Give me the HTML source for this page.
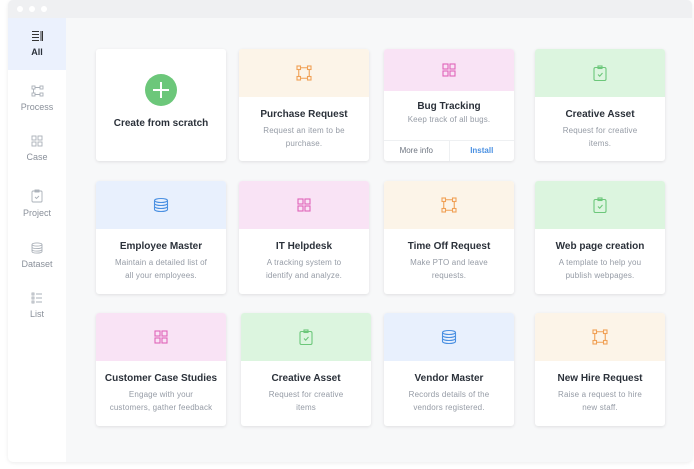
<!DOCTYPE html>
<html><head><style>
*{margin:0;padding:0;box-sizing:border-box}
body{width:694px;height:469px;background:#fff;font-family:"Liberation Sans",sans-serif;position:relative;overflow:hidden}
.win{position:absolute;left:8px;top:0;width:684px;height:462px;background:#f7f8f9;border-radius:5px;box-shadow:0 1px 4px rgba(0,0,0,.08);overflow:hidden}
.top{position:absolute;left:0;top:0;width:100%;height:18px;background:#eff0f2}
.dot{position:absolute;top:6px;width:6px;height:6px;border-radius:50%;background:#fff}
.side{position:absolute;left:0;top:18px;width:58px;height:444px;background:#fff}
.nav{position:absolute;left:0;width:58px;text-align:center;font-size:9px;color:#8a909a}
.nav svg{display:block;margin:0 auto 5px}
.card{position:absolute;width:130px;background:#fff;border-radius:3px;box-shadow:0 1px 3px rgba(0,0,0,.1);overflow:hidden;text-align:center}
.hd{height:48px;display:flex;align-items:center;justify-content:center}
.t{font-size:10px;font-weight:bold;color:#2b313a;margin-top:12px}
.d{font-size:8px;color:#959ba5;line-height:12.5px;margin-top:5px;white-space:nowrap;letter-spacing:.15px}
.o{background:#fcf4e8}.p{background:#f9e3f5}.g{background:#dcf5df}.b{background:#e8f0fd}
</style></head><body>
<div class="win">
<div class="top"><div class="dot" style="left:9px"></div><div class="dot" style="left:21px"></div><div class="dot" style="left:33px"></div></div>
<div class="side">
<div style="position:absolute;left:0;top:0;width:58px;height:52px;background:#ebf1fd"></div>
<div class="nav" style="top:12px;color:#2b313a;font-weight:bold"><svg width="12" height="12" viewBox="0 0 12 12" fill="none" stroke="#333" stroke-width="1"><path d="M1 1.5h7M1 4.5h7M1 7.5h7M1 10.5h7M10 1v10M11.5 1v10"/></svg>All</div>
<div class="nav" style="top:67px"><svg width="13" height="12" viewBox="0 0 13 12" fill="none" stroke="#aab0b8" stroke-width=".9"><rect x="1" y="1" width="3" height="3"/><rect x="9" y="1" width="3" height="3"/><rect x="1" y="8" width="3" height="3"/><rect x="9" y="8" width="3" height="3"/><path d="M4 2.5h5M4 9.5h5M2.5 4v4"/></svg>Process</div>
<div class="nav" style="top:117px"><svg width="12" height="12" viewBox="0 0 12 12" fill="none" stroke="#aab0b8" stroke-width=".9"><rect x="1" y="1" width="4" height="4"/><rect x="7" y="1" width="4" height="4"/><rect x="1" y="7" width="4" height="4"/><rect x="7" y="7" width="4" height="4"/></svg>Case</div>
<div class="nav" style="top:171px"><svg width="12" height="14" viewBox="0 0 12 14" fill="none" stroke="#aab0b8" stroke-width=".9"><rect x="1" y="2" width="10" height="11" rx="1"/><rect x="4" y="1" width="4" height="2"/><path d="M4 8l1.5 1.5L8 7"/></svg>Project</div>
<div class="nav" style="top:224px"><svg width="12" height="12" viewBox="0 0 12 12" fill="none" stroke="#aab0b8" stroke-width=".9"><ellipse cx="6" cy="2.5" rx="5" ry="1.6"/><path d="M1 2.5v7c0 1 2.2 1.6 5 1.6s5-.6 5-1.6v-7M1 5c0 1 2.2 1.6 5 1.6s5-.6 5-1.6M1 7.5c0 1 2.2 1.6 5 1.6s5-.6 5-1.6"/></svg>Dataset</div>
<div class="nav" style="top:274px"><svg width="12" height="12" viewBox="0 0 12 12" fill="none" stroke="#aab0b8" stroke-width=".9"><rect x="1" y="1" width="2" height="2"/><rect x="1" y="5" width="2" height="2"/><rect x="1" y="9" width="2" height="2"/><path d="M5 2h6M5 6h6M5 10h6"/></svg>List</div>
</div>
</div>

<svg style="display:none"><defs>
<g id="proc" fill="none" stroke="#f0a055" stroke-width="1.1"><rect x="1" y="1" width="3.5" height="3.5"/><rect x="11.5" y="1" width="3.5" height="3.5"/><rect x="1" y="11.5" width="3.5" height="3.5"/><rect x="11.5" y="11.5" width="3.5" height="3.5"/><path d="M4.5 2.75h7M4.5 13.25h7M2.75 4.5v7M13.25 4.5v7"/></g>
<g id="case" fill="none" stroke="#e064b8" stroke-width="1.1"><rect x="2" y="2" width="5" height="5"/><rect x="9" y="2" width="5" height="5"/><rect x="2" y="9" width="5" height="5"/><rect x="9" y="9" width="5" height="5"/></g>
<g id="proj" fill="none" stroke="#6cc77a" stroke-width="1.1"><rect x="2" y="2.5" width="12" height="13" rx="1.5"/><rect x="6" y="1" width="4" height="2.5"/><path d="M6 9.5l1.7 1.7L10.5 8"/></g>
<g id="data" fill="none" stroke="#4a90e2" stroke-width="1.1"><ellipse cx="8" cy="3.5" rx="6.5" ry="2"/><path d="M1.5 3.5v9c0 1.1 2.9 2 6.5 2s6.5-.9 6.5-2v-9M1.5 6.5c0 1.1 2.9 2 6.5 2s6.5-.9 6.5-2M1.5 9.5c0 1.1 2.9 2 6.5 2s6.5-.9 6.5-2"/></g>
</defs></svg>

<div class="card" style="left:96px;top:49px;height:112px">
<div style="width:32px;height:32px;border-radius:50%;background:#6cc77a;margin:25px auto 0;position:relative"><div style="position:absolute;left:8px;top:15px;width:16px;height:1.6px;background:#fff"></div><div style="position:absolute;left:15.2px;top:8px;width:1.6px;height:16px;background:#fff"></div></div>
<div class="t" style="margin-top:12px">Create from scratch</div></div>

<div class="card" style="left:239px;top:49px;height:112px"><div class="hd o"><svg width="16" height="16"><use href="#proc"/></svg></div><div class="t">Purchase Request</div><div class="d">Request an item to be<br>purchase.</div></div>

<div class="card" style="left:384px;top:49px;height:112px"><div class="hd p" style="height:42px"><svg width="16" height="16"><use href="#case"/></svg></div><div class="t" style="margin-top:10px">Bug Tracking</div><div class="d" style="margin-top:2px">Keep track of all bugs.</div>
<div style="position:absolute;left:0;bottom:0;width:130px;height:21px;border-top:1px solid #eef0f2;font-size:8px;display:flex"><div style="flex:1;line-height:20px;color:#6e7580;border-right:1px solid #eef0f2">More info</div><div style="flex:1;line-height:20px;color:#4a90e2;font-weight:bold">Install</div></div></div>

<div class="card" style="left:535px;top:49px;height:112px"><div class="hd g"><svg width="16" height="16"><use href="#proj"/></svg></div><div class="t">Creative Asset</div><div class="d">Request for creative<br>items.</div></div>

<div class="card" style="left:96px;top:181px;height:113px"><div class="hd b"><svg width="16" height="16"><use href="#data"/></svg></div><div class="t">Employee Master</div><div class="d">Maintain a detailed list of<br>all your employees.</div></div>
<div class="card" style="left:239px;top:181px;height:113px"><div class="hd p"><svg width="16" height="16"><use href="#case"/></svg></div><div class="t">IT Helpdesk</div><div class="d">A tracking system to<br>identify and analyze.</div></div>
<div class="card" style="left:384px;top:181px;height:113px"><div class="hd o"><svg width="16" height="16"><use href="#proc"/></svg></div><div class="t">Time Off Request</div><div class="d">Make PTO and leave<br>requests.</div></div>
<div class="card" style="left:535px;top:181px;height:113px"><div class="hd g"><svg width="16" height="16"><use href="#proj"/></svg></div><div class="t">Web page creation</div><div class="d">A template to help you<br>publish webpages.</div></div>

<div class="card" style="left:96px;top:313px;height:113px"><div class="hd p"><svg width="16" height="16"><use href="#case"/></svg></div><div class="t">Customer Case Studies</div><div class="d">Engage with your<br>customers, gather feedback</div></div>
<div class="card" style="left:241px;top:313px;height:113px"><div class="hd g"><svg width="16" height="16"><use href="#proj"/></svg></div><div class="t">Creative Asset</div><div class="d">Request for creative<br>items</div></div>
<div class="card" style="left:384px;top:313px;height:113px"><div class="hd b"><svg width="16" height="16"><use href="#data"/></svg></div><div class="t">Vendor Master</div><div class="d">Records details of the<br>vendors registered.</div></div>
<div class="card" style="left:535px;top:313px;height:113px"><div class="hd o"><svg width="16" height="16"><use href="#proc"/></svg></div><div class="t">New Hire Request</div><div class="d">Raise a request to hire<br>new staff.</div></div>
</body></html>
